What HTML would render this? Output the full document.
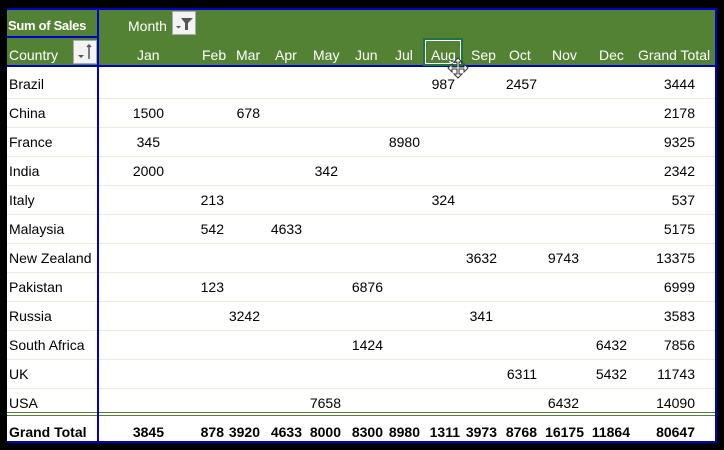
<!DOCTYPE html>
<html><head><style>
body{margin:0;width:724px;height:450px;background:#000;overflow:hidden;font-family:"Liberation Sans",sans-serif;font-size:14px;position:relative}
#s{position:absolute;left:7px;top:9px;width:710px;height:434px;background:#fff}
.g{position:absolute;background:#548235}
.t{position:absolute;white-space:nowrap;line-height:16px}
.w{color:#fff}
.ln{position:absolute;left:7px;width:710px;height:1px;background:#e2efda}
.b{position:absolute;background:#0000cc}
.bd{font-weight:bold}
</style></head><body>
<div id="s"></div>
<div class="g" style="left:7px;top:9px;width:710px;height:58px"></div>
<div class="ln" style="top:98px"></div><div class="ln" style="top:127px"></div><div class="ln" style="top:156px"></div><div class="ln" style="top:185px"></div><div class="ln" style="top:214px"></div><div class="ln" style="top:243px"></div><div class="ln" style="top:272px"></div><div class="ln" style="top:301px"></div><div class="ln" style="top:330px"></div><div class="ln" style="top:359px"></div><div class="ln" style="top:388px"></div>
<div style="position:absolute;left:7px;width:710px;top:412px;height:1px;background:#548235"></div>
<div style="position:absolute;left:7px;width:710px;top:415px;height:1px;background:#548235"></div>
<div class="b" style="left:7px;top:8px;width:710px;height:2px"></div>
<div class="b" style="left:7px;top:441px;width:710px;height:2px"></div>
<div class="b" style="left:715px;top:8px;width:2px;height:435px"></div>
<div class="b" style="left:97px;top:8px;width:2px;height:435px"></div>
<div class="b" style="left:7px;top:36px;width:91px;height:2px"></div>
<div class="b" style="left:7px;top:65px;width:710px;height:2px"></div>
<div class="t w bd" style="left:8px;top:18px;font-size:13px;letter-spacing:-0.3px">Sum of Sales</div>
<div class="t w" style="left:128px;top:18px">Month</div>
<div style="position:absolute;left:172px;top:11px;width:24px;height:24px;background:#f3f3f3;border:1px solid #aaa;box-sizing:border-box">
<svg width="22" height="22" viewBox="0 0 22 22"><path d="M8 6h12l-5 5v7h-3v-7z" fill="#555"/><path d="M3 14h5l-2.5 2.5z" fill="#555"/></svg></div>
<div class="t w" style="left:9px;top:47px">Country</div>
<div style="position:absolute;left:73px;top:40px;width:24px;height:24px;background:#f3f3f3;border:1px solid #aaa;box-sizing:border-box">
<svg width="22" height="22" viewBox="0 0 22 22"><path d="M4 14h6l-3 3z" fill="#555"/><path d="M15 4v14M13 6l2-2 2 2" stroke="#555" stroke-width="1.5" fill="none"/></svg></div>
<div style="position:absolute;left:423px;top:38px;width:40px;height:28px;border:2px solid #217346;box-sizing:border-box"><div style="position:absolute;left:0;top:0;right:0;bottom:0;border:1px solid #fff"></div></div>
<div class="t w" style="left:137px;top:47px">Jan</div><div class="t w" style="left:202px;top:47px">Feb</div><div class="t w" style="left:236px;top:47px">Mar</div><div class="t w" style="left:275px;top:47px">Apr</div><div class="t w" style="left:313px;top:47px">May</div><div class="t w" style="left:355px;top:47px">Jun</div><div class="t w" style="left:395px;top:47px">Jul</div><div class="t w" style="left:431px;top:47px">Aug</div><div class="t w" style="left:471px;top:47px">Sep</div><div class="t w" style="left:509px;top:47px">Oct</div><div class="t w" style="left:552px;top:47px">Nov</div><div class="t w" style="left:599px;top:47px">Dec</div><div class="t w" style="left:638px;top:47px">Grand Total</div>
<svg style="position:absolute;left:446px;top:56px" width="24" height="24" viewBox="0 0 24 24"><path d="M12 2l4 4h-3v5h5V8l4 4-4 4v-3h-5v5h3l-4 4-4-4h3v-5H6v3l-4-4 4-4v3h5V6H8z" fill="#fff" stroke="#333" stroke-width="1"/></svg>
<div class="t" style="left:9px;top:76px">Brazil</div><div class="t" style="left:9px;top:105px">China</div><div class="t" style="left:9px;top:134px">France</div><div class="t" style="left:9px;top:163px">India</div><div class="t" style="left:9px;top:192px">Italy</div><div class="t" style="left:9px;top:221px">Malaysia</div><div class="t" style="left:9px;top:250px">New Zealand</div><div class="t" style="left:9px;top:279px">Pakistan</div><div class="t" style="left:9px;top:308px">Russia</div><div class="t" style="left:9px;top:337px">South Africa</div><div class="t" style="left:9px;top:366px">UK</div><div class="t" style="left:9px;top:395px">USA</div>
<div class="t bd" style="left:9px;top:424px">Grand Total</div>
<div class="t" style="right:269px;top:76px">987</div><div class="t" style="right:187px;top:76px">2457</div><div class="t" style="right:29px;top:76px">3444</div>
<div class="t" style="right:560px;top:105px">1500</div><div class="t" style="right:464px;top:105px">678</div><div class="t" style="right:29px;top:105px">2178</div>
<div class="t" style="right:564px;top:134px">345</div><div class="t" style="right:304px;top:134px">8980</div><div class="t" style="right:29px;top:134px">9325</div>
<div class="t" style="right:560px;top:163px">2000</div><div class="t" style="right:386px;top:163px">342</div><div class="t" style="right:29px;top:163px">2342</div>
<div class="t" style="right:500px;top:192px">213</div><div class="t" style="right:269px;top:192px">324</div><div class="t" style="right:29px;top:192px">537</div>
<div class="t" style="right:500px;top:221px">542</div><div class="t" style="right:422px;top:221px">4633</div><div class="t" style="right:29px;top:221px">5175</div>
<div class="t" style="right:227px;top:250px">3632</div><div class="t" style="right:145px;top:250px">9743</div><div class="t" style="right:29px;top:250px">13375</div>
<div class="t" style="right:500px;top:279px">123</div><div class="t" style="right:341px;top:279px">6876</div><div class="t" style="right:29px;top:279px">6999</div>
<div class="t" style="right:464px;top:308px">3242</div><div class="t" style="right:231px;top:308px">341</div><div class="t" style="right:29px;top:308px">3583</div>
<div class="t" style="right:341px;top:337px">1424</div><div class="t" style="right:97px;top:337px">6432</div><div class="t" style="right:29px;top:337px">7856</div>
<div class="t" style="right:187px;top:366px">6311</div><div class="t" style="right:97px;top:366px">5432</div><div class="t" style="right:29px;top:366px">11743</div>
<div class="t" style="right:383px;top:395px">7658</div><div class="t" style="right:145px;top:395px">6432</div><div class="t" style="right:29px;top:395px">14090</div>
<div class="t bd" style="right:560px;top:424px">3845</div><div class="t bd" style="right:500px;top:424px">878</div><div class="t bd" style="right:464px;top:424px">3920</div><div class="t bd" style="right:422px;top:424px">4633</div><div class="t bd" style="right:383px;top:424px">8000</div><div class="t bd" style="right:341px;top:424px">8300</div><div class="t bd" style="right:304px;top:424px">8980</div><div class="t bd" style="right:264px;top:424px">1311</div><div class="t bd" style="right:227px;top:424px">3973</div><div class="t bd" style="right:187px;top:424px">8768</div><div class="t bd" style="right:140px;top:424px">16175</div><div class="t bd" style="right:94px;top:424px">11864</div><div class="t bd" style="right:29px;top:424px">80647</div>
</body></html>
